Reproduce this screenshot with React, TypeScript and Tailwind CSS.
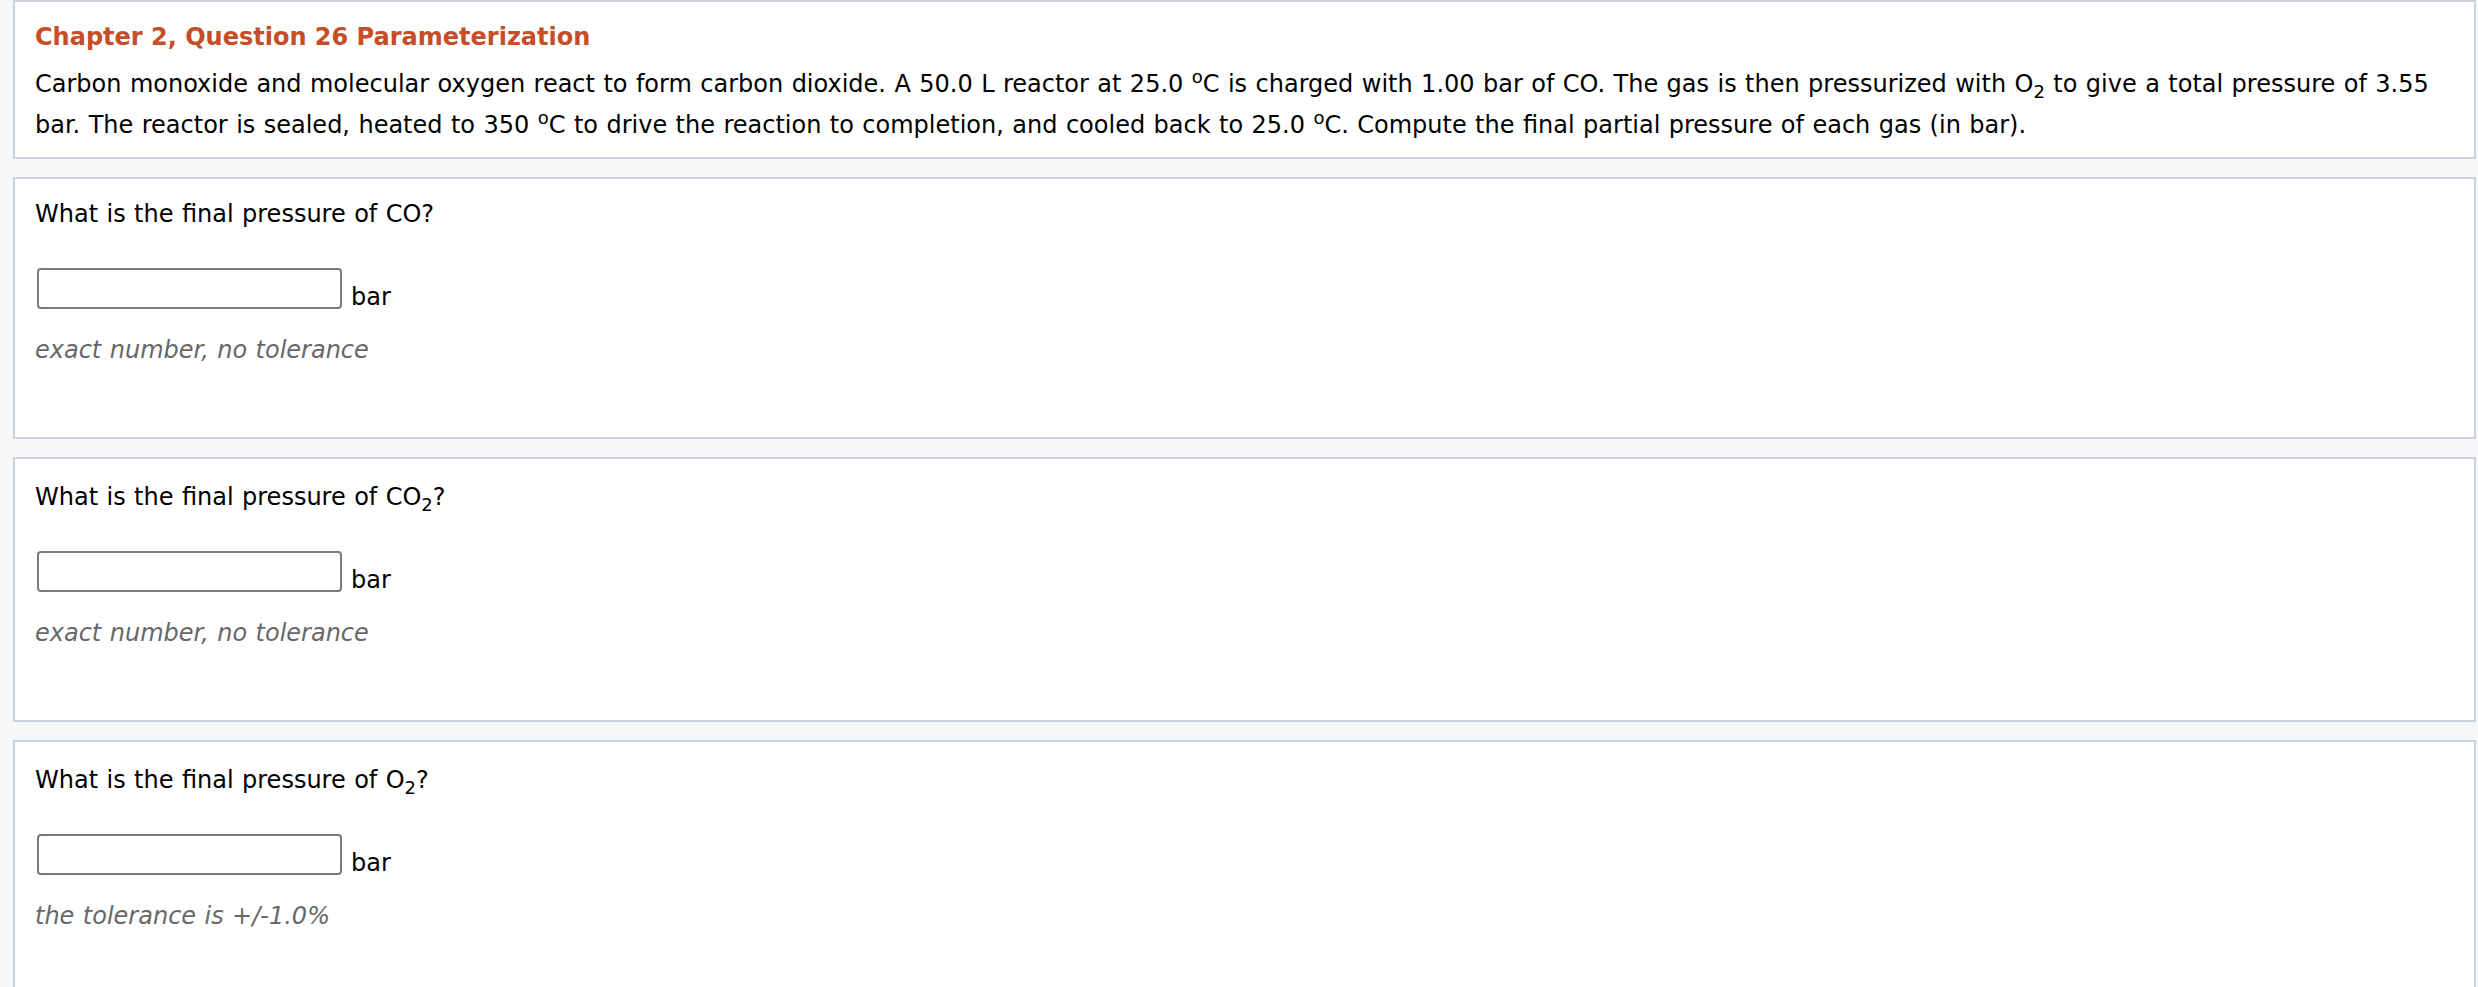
import React from "react";

const Sub = ({ children }: { children: React.ReactNode }) => (
  <sub className="text-[18px] bottom-[-6px]">{children}</sub>
);
const Deg = () => <sup className="text-[18px] top-[-9px]">o</sup>;

function Question({
  q,
  note,
  sub,
}: {
  q: React.ReactNode;
  note: string;
  sub?: boolean;
}) {
  return (
    <div className="border-2 border-[#cdd3dc] bg-white pl-[20px] pr-[20px] pt-[15px] pb-[66px]">
      <p className={`leading-[41px] ${sub ? "pt-[3px]" : ""}`}>{q}</p>
      <div className="mt-[33px] ml-[2px] flex items-end gap-[9px]">
        <input
          type="text"
          className="h-[41px] w-[305px] rounded-[4px] border-2 border-[#7a7a7a] bg-white outline-none"
        />
        <span className="leading-[24px]">bar</span>
      </div>
      <p className="mt-[21px] leading-[41px] italic text-[#686868]">{note}</p>
    </div>
  );
}

export default function App() {
  return (
    <div className="min-h-screen bg-[#f6f7f9] pl-[13px] pr-[2px] font-['DejaVu_Sans',Verdana,sans-serif] text-[24px] text-black [word-spacing:0.8px]">
      <div className="flex flex-col gap-[18px]">
        <div className="border-2 border-[#cdd3dc] bg-white pl-[20px] pr-[20px] pt-[15px] pb-[11px]">
          <h1 className="font-bold leading-[41px] text-[#c54e27] [word-spacing:0px]">
            Chapter 2, Question 26 Parameterization
          </h1>
          <div className="mt-[6px] leading-[41px]">
            <div className="whitespace-nowrap">
              Carbon monoxide and molecular oxygen react to form carbon dioxide. A 50.0 L reactor at 25.0{" "}
              <Deg />C is charged with 1.00 bar of CO. The gas is then pressurized with O<Sub>2</Sub> to give a
              total pressure of 3.55
            </div>
            <div className="whitespace-nowrap">
              bar. The reactor is sealed, heated to 350 <Deg />C to drive the reaction to completion, and cooled
              back to 25.0 <Deg />C. Compute the final partial pressure of each gas (in bar).
            </div>
          </div>
        </div>
        <Question q="What is the final pressure of CO?" note="exact number, no tolerance" />
        <Question
          sub
          q={
            <>
              What is the final pressure of CO<Sub>2</Sub>?
            </>
          }
          note="exact number, no tolerance"
        />
        <Question
          sub
          q={
            <>
              What is the final pressure of O<Sub>2</Sub>?
            </>
          }
          note="the tolerance is +/-1.0%"
        />
      </div>
    </div>
  );
}
